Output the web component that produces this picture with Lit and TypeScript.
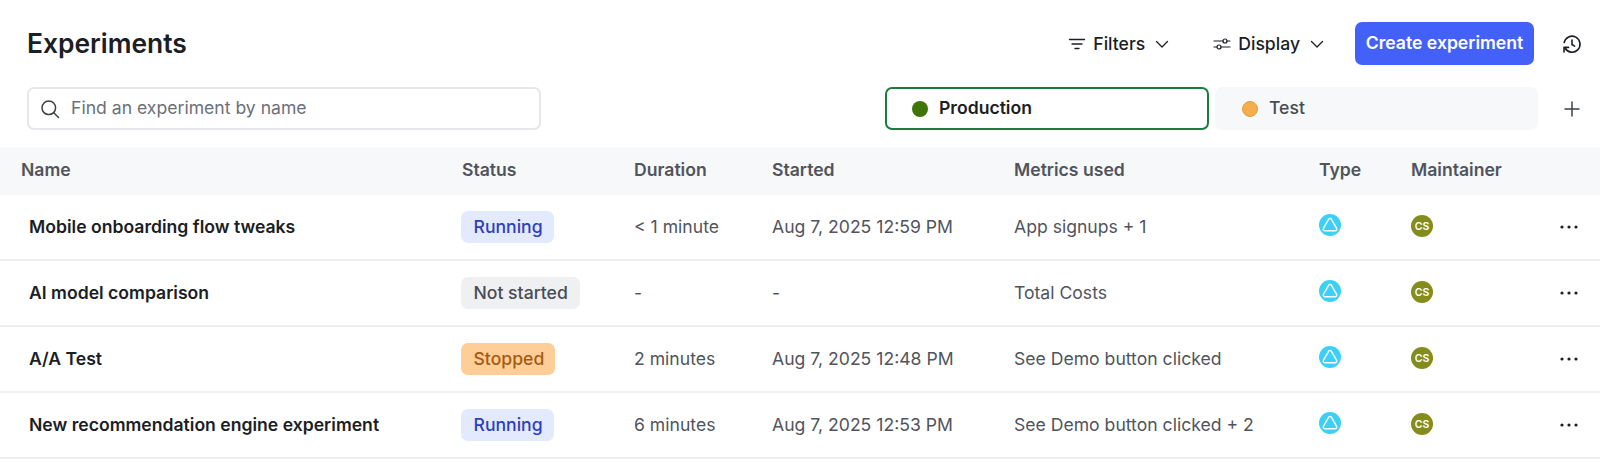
import { LitElement, html, css, svg } from "lit";
import { customElement } from "lit/decorators.js";

type Row = { name: string; status: string; cls: string; dur: string; started: string; metrics: string };

const rows: Row[] = [
  { name: "Mobile onboarding flow tweaks", status: "Running", cls: "running", dur: "< 1 minute", started: "Aug 7, 2025 12:59 PM", metrics: "App signups + 1" },
  { name: "AI model comparison", status: "Not started", cls: "idle", dur: "-", started: "-", metrics: "Total Costs" },
  { name: "A/A Test", status: "Stopped", cls: "stopped", dur: "2 minutes", started: "Aug 7, 2025 12:48 PM", metrics: "See Demo button clicked" },
  { name: "New recommendation engine experiment", status: "Running", cls: "running", dur: "6 minutes", started: "Aug 7, 2025 12:53 PM", metrics: "See Demo button clicked + 2" },
];

const chevron = html`<svg class="chev" width="16" height="16" viewBox="0 0 16 16" fill="none" stroke="#1b1e24" stroke-width="1.3" stroke-linecap="round" stroke-linejoin="round"><path d="M2.5 5.5 8 11l5.5-5.5"/></svg>`;

@customElement("app-root")
export class AppRoot extends LitElement {
  static styles = css`
    :host { display: block; width: 1600px; height: 463px; overflow: hidden; background: #fff; font-family: Inter, "Liberation Sans", sans-serif; color: #1b1e24; }
    .top { display: flex; align-items: center; height: 43px; margin-top: 22px; padding: 0 18px 0 27px; }
    h1 { margin: 0; font-size: 26.4px; font-weight: 600; line-height: 43px; }
    .spacer { flex: 1; }
    .tool { display: flex; align-items: center; font-size: 17.6px; font-weight: 500; gap: 9px; }
    .filters { margin-right: 43px; }
    .display { margin-right: 30px; }
    .ico { margin-right: -2px; }
    .create { width: 179px; height: 43px; box-sizing: border-box; padding-bottom: 2px; border-radius: 7px; background: #4361f8; color: #fff; font-size: 17.6px; font-weight: 600; display: flex; align-items: center; justify-content: center; margin-right: 28px; }
    .hist { width: 20px; height: 20px; display: block; }
    .second { display: flex; align-items: center; height: 43px; margin-top: 22px; padding: 0 18px 0 27px; }
    .search { width: 514px; height: 43px; box-sizing: border-box; border: 2px solid #e6e7eb; border-radius: 7px; display: flex; align-items: center; padding-left: 10.5px; gap: 11.5px; font-size: 17.6px; color: #6c7079; }
    .search span, .tab span.t { position: relative; top: -1px; }
    .tab { height: 43px; box-sizing: border-box; border-radius: 7px; display: flex; align-items: center; font-size: 17.6px; }
    .tab.prod { width: 324px; border: 2px solid #1a7d3f; padding-left: 25px; font-weight: 600; gap: 11px; color: #1b1e24; }
    .tab.test { width: 323px; background: #f7f8fa; margin-left: 6px; padding-left: 27px; gap: 11px; color: #484c54; font-weight: 500; }
    .dot { width: 16px; height: 16px; border-radius: 50%; box-sizing: border-box; }
    .dot.g { background: #3f7408; }
    .dot.o { background: #f6ad4b; border: 1px solid #e0a040; }
    .plus { margin-left: 24px; width: 20px; height: 20px; display: block; }
    .row { display: grid; grid-template-columns: 461px 173px 138px 242px 305px 92px 1fr auto; align-items: center; }
    .head { height: 48px; box-sizing: border-box; padding-bottom: 3px; margin-top: 17px; background: #f7f8fa; font-weight: 600; font-size: 17.6px; color: #50545c; }
    .head > div:first-child { padding-left: 21px; }
    .head > div:nth-child(2) { padding-left: 1px; }
    .body { height: 66px; box-sizing: border-box; padding-bottom: 2px; border-bottom: 2px solid #eeeff1; font-size: 17.6px; color: #50545c; }
    .name { padding-left: 29px; font-weight: 600; color: #1b1e24; }
    .badge { display: inline-flex; align-items: center; box-sizing: border-box; height: 32px; padding: 0 12px 2px 12.5px; border-radius: 7px; font-weight: 500; position: relative; top: 1px; }
    .badge.running { background: #e4eafd; color: #2c3fc0; padding-right: 11px; }
    .badge.idle { background: #eff0f2; color: #484c54; }
    .badge.stopped { background: #fecd98; color: #a25c12; padding-right: 11px; }
    .type { display: flex; position: relative; top: -1.5px; }
    .av { width: 22px; height: 22px; border-radius: 50%; background: #848c1c; color: #fff; font-size: 10.5px; font-weight: 600; display: flex; align-items: center; justify-content: center; }
    .more { display: flex; justify-content: flex-end; padding-right: 22px; position: relative; top: 1px; }
  `;

  render() {
    return html`
      <div class="top">
        <h1>Experiments</h1>
        <div class="spacer"></div>
        <div class="tool filters">
          <svg class="ico" width="18" height="18" viewBox="0 0 18 18" fill="none" stroke="#1b1e24" stroke-width="1.3" stroke-linecap="round"><path d="M1.5 4.5h15M4 9h10M7 13.5h4"/></svg>
          <span>Filters</span>${chevron}
        </div>
        <div class="tool display">
          <svg class="ico" width="18" height="18" viewBox="0 0 18 18" fill="none" stroke="#1b1e24" stroke-width="1.2" stroke-linecap="round"><path d="M1 6h9M14 6h3M1 12h3M8 12h9"/><circle cx="12" cy="6" r="2"/><circle cx="6" cy="12" r="2"/></svg>
          <span>Display</span>${chevron}
        </div>
        <div class="create">Create experiment</div>
        <svg class="hist" viewBox="0 0 20 20" fill="none" stroke="#1b1e24" stroke-width="1.6" stroke-linecap="round" stroke-linejoin="round"><path d="M2.2 8.5A8 8 0 1 1 3 14"/><path d="M2 18v-4.6h4.6"/><path d="M10 6v4.5l2.6 1.6"/></svg>
      </div>
      <div class="second">
        <div class="search">
          <svg width="20" height="20" viewBox="0 0 20 20" fill="none" stroke="#3d4149" stroke-width="1.5" stroke-linecap="round"><circle cx="8.8" cy="8.8" r="6.8"/><path d="m13.8 13.8 4.7 4.7"/></svg>
          <span>Find an experiment by name</span>
        </div>
        <div class="spacer"></div>
        <div class="tab prod"><span class="dot g"></span><span class="t">Production</span></div>
        <div class="tab test"><span class="dot o"></span><span class="t">Test</span></div>
        <svg class="plus" viewBox="0 0 20 20" fill="none" stroke="#3d4149" stroke-width="1.5" stroke-linecap="round"><path d="M10 3v14M3 10h14"/></svg>
      </div>
      <div class="row head">
        <div>Name</div><div>Status</div><div>Duration</div><div>Started</div><div>Metrics used</div><div>Type</div><div>Maintainer</div><div></div>
      </div>
      ${rows.map(
        (r) => html`
          <div class="row body">
            <div class="name">${r.name}</div>
            <div><span class="badge ${r.cls}">${r.status}</span></div>
            <div>${r.dur}</div>
            <div>${r.started}</div>
            <div>${r.metrics}</div>
            <div class="type">${svg`<svg width="22" height="22" viewBox="0 0 22 22"><circle cx="11" cy="11" r="11" fill="#3dd0f6"/><path d="M9.7 5.2a1.5 1.5 0 0 1 2.6 0l5.3 9.2a1.5 1.5 0 0 1-1.3 2.3H5.7a1.5 1.5 0 0 1-1.3-2.3Z" fill="none" stroke="#fff" stroke-width="1.4"/></svg>`}</div>
            <div><div class="av">CS</div></div>
            <div class="more"><svg width="18" height="4" viewBox="0 0 18 4" fill="#1b1e24"><circle cx="2" cy="2" r="1.6"/><circle cx="9" cy="2" r="1.6"/><circle cx="16" cy="2" r="1.6"/></svg></div>
          </div>
        `
      )}
    `;
  }
}
